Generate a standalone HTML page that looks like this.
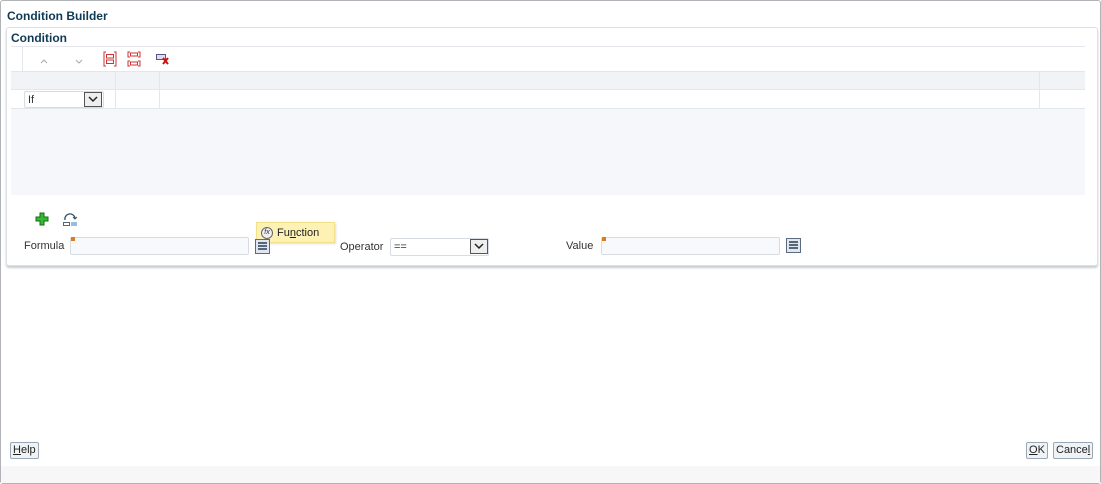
<!DOCTYPE html>
<html><head><style>
*{box-sizing:border-box;margin:0;padding:0}
body{width:1101px;height:484px;background:#fff;font-family:"Liberation Sans",sans-serif;font-size:11px;color:#333;position:relative;overflow:hidden}
.abs{position:absolute}
.frame{left:0;top:0;width:1101px;height:484px;border:1px solid #b0b4b8;border-radius:3px}
.title{left:7px;top:9px;font-weight:bold;font-size:12px;color:#0e3a55}
.panel{left:6px;top:27px;width:1092px;height:239px;border:1px solid #dde1e5;border-radius:3px;box-shadow:0 2px 2px #c8ccd0;background:#fff}
.ptitle{left:11px;top:31px;font-weight:bold;font-size:12px;color:#0e3a55}
.tbl{left:11px;top:46px;width:1074px;height:149px;background:#f5f7fa;border-top:1px solid #e3e6ea}
.inp{border:1px solid #d6dce2;background:#f7f9fc;border-radius:2px;height:18px}
.dd{border:1px solid #555;background:#eee;width:18px;height:15px}
.btn{border:1px solid #9aa6b2;background:#f0f3f6;border-radius:2px;height:17px;font-size:11px;padding:1px 2px;color:#222}
.foot{left:1px;top:466px;width:1099px;height:17px;background:#f7f7f7}
</style></head><body>
<div class="abs frame"></div>
<div class="abs title">Condition Builder</div>
<div class="abs panel"></div>
<div class="abs ptitle">Condition</div>
<div class="abs tbl"></div>
<div class="abs" style="left:11px;top:47px;width:1074px;height:25px;background:#fff;border-bottom:1px solid #e3e6ea"></div>
<div class="abs" style="left:22px;top:47px;width:1px;height:25px;background:#e3e6ea"></div>
<svg class="abs" style="left:40px;top:59px" width="8" height="5"><path d="M1 4L4 1L7 4" stroke="#aaa" fill="none"/></svg>
<svg class="abs" style="left:75px;top:59px" width="8" height="5"><path d="M1 1L4 4L7 1" stroke="#aaa" fill="none"/></svg>
<svg class="abs" style="left:103px;top:51px" width="14" height="16"><path d="M3 1H1V15H3M11 1H13V15H11" stroke="#c33" fill="none"/><rect x="3.5" y="3.5" width="7" height="3.5" stroke="#c33" fill="none"/><rect x="3.5" y="9" width="7" height="3.5" stroke="#c33" fill="none"/></svg>
<svg class="abs" style="left:127px;top:51px" width="14" height="16"><path d="M3 1H1V6H3M11 1H13V6H11M3 10H1V15H3M11 10H13V15H11" stroke="#c33" fill="none"/><rect x="3.5" y="2" width="7" height="3" stroke="#c33" fill="none"/><rect x="3.5" y="11" width="7" height="3" stroke="#c33" fill="none"/></svg>
<svg class="abs" style="left:156px;top:53px" width="14" height="12"><rect x="0.5" y="1.5" width="9" height="5" stroke="#558" fill="#dde" /><path d="M7 5L12 11M12 5L7 11" stroke="#c11" stroke-width="2"/></svg>
<div class="abs" style="left:11px;top:72px;width:1074px;height:18px;background:#f1f3f6;border-bottom:1px solid #e3e6ea"></div>
<div class="abs" style="left:11px;top:90px;width:1074px;height:19px;background:#fff;border-bottom:1px solid #e3e6ea"></div>
<div class="abs" style="left:115px;top:72px;width:1px;height:37px;background:#e3e6ea"></div>
<div class="abs" style="left:159px;top:72px;width:1px;height:37px;background:#e3e6ea"></div>
<div class="abs" style="left:1039px;top:72px;width:1px;height:37px;background:#e3e6ea"></div>
<div class="abs inp" style="left:24px;top:91px;width:80px;height:17px;background:#fff;padding:2px 3px">If</div>
<div class="abs dd" style="left:84px;top:92px"></div>
<svg class="abs" style="left:88px;top:96px" width="10" height="7"><path d="M1 1L5 5L9 1" stroke="#222" stroke-width="1.5" fill="none"/></svg>
<svg class="abs" style="left:35px;top:212px" width="14" height="14"><path d="M5 1H9V5H13V9H9V13H5V9H1V5H5Z" fill="#3b3" stroke="#186818"/></svg>
<svg class="abs" style="left:62px;top:211px" width="16" height="16"><path d="M3 9A5 5 0 0 1 13 7" stroke="#356" fill="none" stroke-width="1.3"/><path d="M11 6l2 2 2-2" stroke="#356" fill="none"/><rect x="1.5" y="11.5" width="6" height="3" stroke="#567" fill="#fff"/><rect x="9" y="11" width="6" height="4" fill="#9bd"/></svg>
<div class="abs" style="left:256px;top:222px;width:79px;height:21px;background:#fdf2b3;border:1px solid #f3e08a;box-shadow:1px 1px 2px #ddd"></div>
<div class="abs" style="left:261px;top:227px;width:12px;height:12px;border:1px solid #666;border-radius:50%;font-size:7px;font-style:italic;text-align:center;line-height:10px;background:#eee">fx</div>
<div class="abs" style="left:277px;top:227px;color:#222">Fu<u>n</u>ction</div>
<div class="abs" style="left:24px;top:240px">Formula</div>
<div class="abs inp" style="left:70px;top:237px;width:179px"></div>
<div class="abs" style="left:71px;top:237px;width:4px;height:4px;background:#e07a1a"></div>
<svg class="abs" style="left:255px;top:239px" width="15" height="15"><rect x="0.5" y="0.5" width="14" height="14" fill="#dfe6ef" stroke="#5a6a80"/><path d="M3 4h9M3 7h9M3 10h9" stroke="#2a3a55" stroke-width="1.5"/></svg>
<div class="abs" style="left:340px;top:241px">Operator</div>
<div class="abs inp" style="left:390px;top:238px;width:99px;padding:2px 3px;background:#fff">==</div>
<div class="abs dd" style="left:470px;top:239px"></div>
<svg class="abs" style="left:474px;top:243px" width="10" height="7"><path d="M1 1L5 5L9 1" stroke="#222" stroke-width="1.5" fill="none"/></svg>
<div class="abs" style="left:566px;top:240px">Value</div>
<div class="abs inp" style="left:601px;top:237px;width:179px"></div>
<div class="abs" style="left:602px;top:237px;width:4px;height:4px;background:#e07a1a"></div>
<svg class="abs" style="left:786px;top:238px" width="15" height="15"><rect x="0.5" y="0.5" width="14" height="14" fill="#dfe6ef" stroke="#5a6a80"/><path d="M3 4h9M3 7h9M3 10h9" stroke="#2a3a55" stroke-width="1.5"/></svg>
<div class="abs btn" style="left:10px;top:442px"><u>H</u>elp</div>
<div class="abs btn" style="left:1026px;top:442px"><u>O</u>K</div>
<div class="abs btn" style="left:1053px;top:442px">Cance<u>l</u></div>
<div class="abs foot"></div>
</body></html>
